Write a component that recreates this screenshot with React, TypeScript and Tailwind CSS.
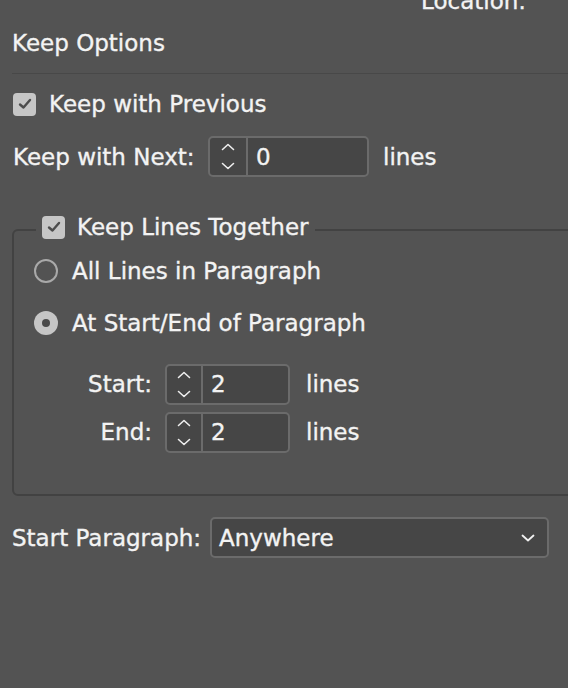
import type { ReactNode } from "react";

const FONT = { fontFamily: '"DejaVu Sans", "Liberation Sans", sans-serif' };

function Checkbox() {
  return (
    <span className="flex h-[23px] w-[23px] shrink-0 items-center justify-center rounded-[4px] bg-[#c6c6c6]">
      <svg width="14" height="12" viewBox="0 0 14 12" fill="none" aria-hidden="true">
        <path d="M2 6.5 L5.5 9.5 L12 2" stroke="#4d4d4d" strokeWidth="2.4" strokeLinecap="round" strokeLinejoin="round" />
      </svg>
    </span>
  );
}

function Radio({ checked }: { checked?: boolean }) {
  if (checked) {
    return (
      <span className="flex h-[24px] w-[24px] shrink-0 items-center justify-center rounded-full bg-[#c6c6c6]">
        <span className="h-[8px] w-[8px] rounded-full bg-[#4a4a4a]" />
      </span>
    );
  }
  return <span className="h-[24px] w-[24px] shrink-0 rounded-full border-2 border-[#a9a9a9]" />;
}

function Stepper({ value, width, arrowWidth }: { value: string; width: string; arrowWidth: string }) {
  return (
    <div className={`flex h-[41px] ${width} overflow-hidden rounded-[5px] border-2 border-[#6b6b6b] bg-[#464646]`}>
      <div className={`flex ${arrowWidth} flex-col items-center justify-between border-r-2 border-[#6b6b6b] py-[5px]`}>
        <svg width="14" height="8" viewBox="0 0 14 8" fill="none" aria-hidden="true">
          <path d="M1.5 6.5 L7 1.5 L12.5 6.5" stroke="#ededed" strokeWidth="1.6" strokeLinecap="round" strokeLinejoin="round" />
        </svg>
        <svg width="14" height="8" viewBox="0 0 14 8" fill="none" aria-hidden="true">
          <path d="M1.5 1.5 L7 6.5 L12.5 1.5" stroke="#ededed" strokeWidth="1.6" strokeLinecap="round" strokeLinejoin="round" />
        </svg>
      </div>
      <span className="flex items-center pl-[8px]">{value}</span>
    </div>
  );
}

function Row({ className, children }: { className: string; children: ReactNode }) {
  return <div className={`flex items-center ${className}`}>{children}</div>;
}

export default function App() {
  return (
    <div
      className="h-[688px] w-[568px] overflow-hidden bg-[#535353] text-[23px] leading-[26px] text-[#f3f3f3] [-webkit-text-stroke:0.35px_#f3f3f3]"
      style={FONT}
    >
      <div className="-mt-[12px] h-[26px] pl-[421px]">Location:</div>

      <Row className="mt-[16px] h-[26px] pl-[12px]">Keep Options</Row>
      <div className="ml-[12px] mt-[17px] h-px bg-[#484848]" />

      <Row className="mt-[17px] h-[26px] gap-[13px] pl-[13px]">
        <Checkbox />
        <span>Keep with Previous</span>
      </Row>

      <Row className="mt-[19px] h-[41px] pl-[13px]">
        <span className="w-[195px]">Keep with Next:</span>
        <Stepper value="0" width="w-[161px]" arrowWidth="w-[38px]" />
        <span className="ml-[14px]">lines</span>
      </Row>

      <fieldset className="ml-[12px] mt-[38px] w-[640px] rounded-[6px] border-2 border-[#424242] pb-[42px]">
        <legend className="ml-[22px] px-[6px] pb-[6px]">
          <span className="flex h-[24px] items-center gap-[12px]">
            <Checkbox />
            <span>Keep Lines Together</span>
          </span>
        </legend>

        <Row className="mt-[13px] h-[26px] gap-[14px] pl-[20px]">
          <Radio />
          <span>All Lines in Paragraph</span>
        </Row>
        <Row className="mt-[26px] h-[26px] gap-[14px] pl-[20px]">
          <Radio checked />
          <span>At Start/End of Paragraph</span>
        </Row>

        <Row className="mt-[28px] h-[40px]">
          <span className="w-[138px] text-right">Start:</span>
          <span className="ml-[13px]">
            <Stepper value="2" width="w-[125px]" arrowWidth="w-[36px]" />
          </span>
          <span className="ml-[16px]">lines</span>
        </Row>
        <Row className="mt-[8px] h-[40px]">
          <span className="w-[138px] text-right">End:</span>
          <span className="ml-[13px]">
            <Stepper value="2" width="w-[125px]" arrowWidth="w-[36px]" />
          </span>
          <span className="ml-[16px]">lines</span>
        </Row>
      </fieldset>

      <Row className="mt-[21px] h-[41px] pl-[12px]">
        <span className="w-[198px]">Start Paragraph:</span>
        <div className="flex h-[41px] w-[339px] items-center justify-between rounded-[5px] border-2 border-[#6b6b6b] bg-[#464646] pl-[7px] pr-[12px]">
          <span>Anywhere</span>
          <svg width="14" height="8" viewBox="0 0 14 8" fill="none" aria-hidden="true">
            <path d="M1.5 1.5 L7 6.5 L12.5 1.5" stroke="#f1f1f1" strokeWidth="1.8" strokeLinecap="round" strokeLinejoin="round" />
          </svg>
        </div>
      </Row>
    </div>
  );
}
